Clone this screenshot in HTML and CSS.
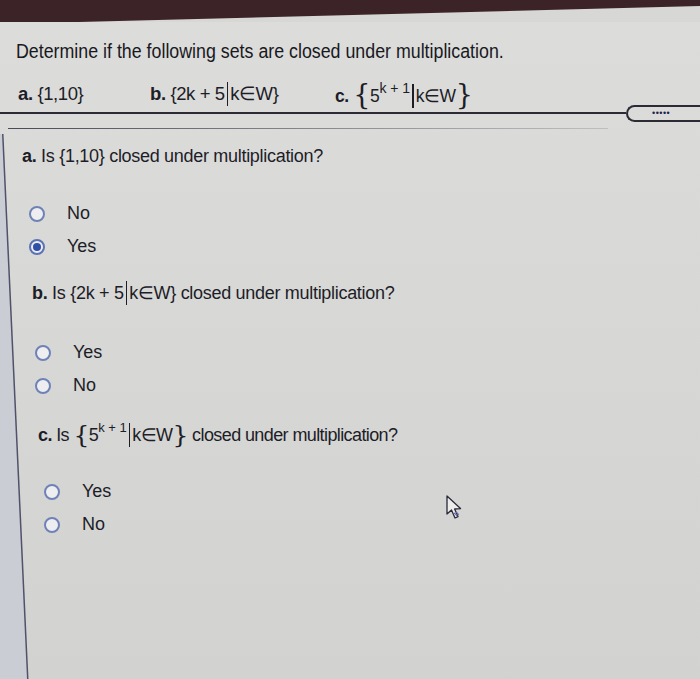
FILE: index.html
```html
<!DOCTYPE html>
<html>
<head>
<meta charset="utf-8">
<link rel="stylesheet" href="styles.css">
</head>
<body>
<div class="topbar"></div>
<div class="screen">
  <header class="prompt">
    <h1 class="title">Determine if the following sets are closed under multiplication.</h1>
    <div class="sets">
      <span class="set set-a"><b>a.</b> {1,10}</span>
      <span class="set set-b"><b>b.</b> {2k + 5<span class="bar"></span>k∈W}</span>
      <span class="set set-c"><b>c.</b> <span class="brace">{</span>5<sup>k + 1</sup><span class="bar"></span>k∈W<span class="brace">}</span></span>
    </div>
    <div class="divider">
      <span class="rule"></span>
      <span class="more">•••••</span>
    </div>
    <div class="rule2"></div>
  </header>

  <section class="question q-a">
    <p class="qtext"><b>a.</b> Is {1,10} closed under multiplication?</p>
    <ul class="options">
      <li><span class="radio"></span>No</li>
      <li><span class="radio checked"></span>Yes</li>
    </ul>
  </section>

  <section class="question q-b">
    <p class="qtext"><b>b.</b> Is {2k + 5<span class="bar"></span>k∈W} closed under multiplication?</p>
    <ul class="options">
      <li><span class="radio"></span>Yes</li>
      <li><span class="radio"></span>No</li>
    </ul>
  </section>

  <section class="question q-c">
    <p class="qtext"><b>c.</b> Is <span class="brace">{</span>5<sup>k + 1</sup><span class="bar"></span>k∈W<span class="brace">}</span> closed under multiplication?</p>
    <ul class="options">
      <li><span class="radio"></span>Yes</li>
      <li><span class="radio"></span>No</li>
    </ul>
    <svg class="cursor" width="20" height="26" viewBox="0 0 20 26">
      <path d="M2 2 L2 20 L6.5 16 L10 24 L13 22.6 L9.6 15 L15.5 14.6 Z" fill="#ecece9" stroke="#2a2a3a" stroke-width="1.3" stroke-linejoin="round"/>
      <path d="M9 19 q2 1 3 3 M11 18 q2 1 2.5 3" stroke="#6a6ab0" stroke-width="1.2" fill="none"/>
    </svg>
  </section>
</div>
</body>
</html>
```

FILE: styles.css
```css
html, body {
  margin: 0;
  padding: 0;
}
body {
  width: 700px;
  height: 679px;
  overflow: hidden;
  background: #d7d7d5;
  font-family: "Liberation Sans", Arial, sans-serif;
  color: #1d1d28;
}
.topbar {
  height: 24px;
  background: #3b2327;
  clip-path: polygon(0 0, 100% 0, 100% 25%, 0 100%);
  margin-bottom: -2px;
}
.screen {
  position: relative;
  background: linear-gradient(180deg, #dcdcda 0%, #d8d8d6 40%, #d2d2d0 100%);
  height: 657px;
}
.screen::before {
  content: "";
  position: absolute;
  left: 0;
  top: 112px;
  bottom: 0;
  width: 30px;
  background: #cbcdd4;
  clip-path: polygon(0 0, 3px 0, 28px 100%, 0 100%);
}
.screen::after {
  content: "";
  position: absolute;
  left: 0;
  top: 112px;
  bottom: 0;
  width: 30px;
  background: #50526a;
  clip-path: polygon(2px 0, 3.5px 0, 28.5px 100%, 27px 100%);
}
.prompt {
  padding-top: 17px;
}
.title {
  margin: 0 0 0 16px;
  font-size: 20px;
  font-weight: normal;
  line-height: 24px;
  transform: scaleX(0.89);
  transform-origin: left center;
  white-space: nowrap;
  color: #181822;
}
.sets {
  display: flex;
  margin: 16px 0 0 18px;
  font-size: 18.5px;
  height: 30px;
  align-items: center;
  letter-spacing: -0.4px;
}
.set b { font-weight: bold; }
.set-a { width: 132px; }
.set-b { width: 185px; }
.set-c { font-size: 17.5px; }
.set-c .brace { font-size: 27px; }
.bar {
  display: inline-block;
  width: 1.5px;
  height: 24px;
  background: #1d1d28;
  vertical-align: -6px;
  margin: 0 2px;
}
.brace {
  font-family: "DejaVu Serif", serif;
  font-size: 24px;
  line-height: 1;
  vertical-align: -2px;
}
sup {
  font-size: 14px;
  vertical-align: 9px;
  line-height: 0;
  letter-spacing: 0;
}
.divider {
  display: flex;
  align-items: center;
  height: 16px;
  margin-top: -4px;
}
.rule {
  flex: 1;
  height: 2px;
  background: #2b2b36;
}
.more {
  width: 72px;
  height: 13px;
  border: 2px solid #2b2b36;
  border-right: none;
  border-radius: 9px 0 0 9px;
  font-size: 9px;
  line-height: 13px;
  letter-spacing: 0.5px;
  text-indent: 24px;
  color: #1a2250;
}
.rule2 {
  margin: 7px 0 0 8px;
  height: 1px;
  width: 600px;
  background: linear-gradient(90deg, #4a4a56 0%, #7a7a84 40%, rgba(150,150,158,0.4) 100%);
}
.question {
  position: relative;
}
.qtext {
  margin: 0;
  font-size: 18px;
  line-height: 22px;
  letter-spacing: -0.3px;
  white-space: nowrap;
}
.qtext b { font-weight: bold; }
.qtext sup { font-size: 13px; }
.qtext .brace { font-size: 25px; }
.options {
  list-style: none;
  margin: 0;
  padding: 0;
}
.options li {
  display: flex;
  align-items: center;
  height: 33px;
  font-size: 18px;
}
.radio {
  box-sizing: border-box;
  width: 16px;
  height: 16px;
  border-radius: 50%;
  border: 2px solid #6f82b8;
  background: #eeeef1;
  margin-right: 22px;
  position: relative;
  flex: none;
}
.radio.checked {
  border-color: #5a72b6;
}
.radio.checked::after {
  content: "";
  position: absolute;
  left: 2px;
  top: 2px;
  width: 8px;
  height: 8px;
  border-radius: 50%;
  background: #2f4fa8;
}
.q-a { padding: 16px 0 0 22px; }
.q-a .options { margin: 30px 0 0 7px; }
.q-b { padding: 18px 0 0 32px; }
.q-b .options { margin: 31px 0 0 3px; }
.q-c { padding: 20px 0 0 38px; }
.q-c .qtext { letter-spacing: -0.6px; }
.q-c .options { margin: 28px 0 0 6px; }
.cursor {
  position: absolute;
  left: 445px;
  top: 92px;
}
```
